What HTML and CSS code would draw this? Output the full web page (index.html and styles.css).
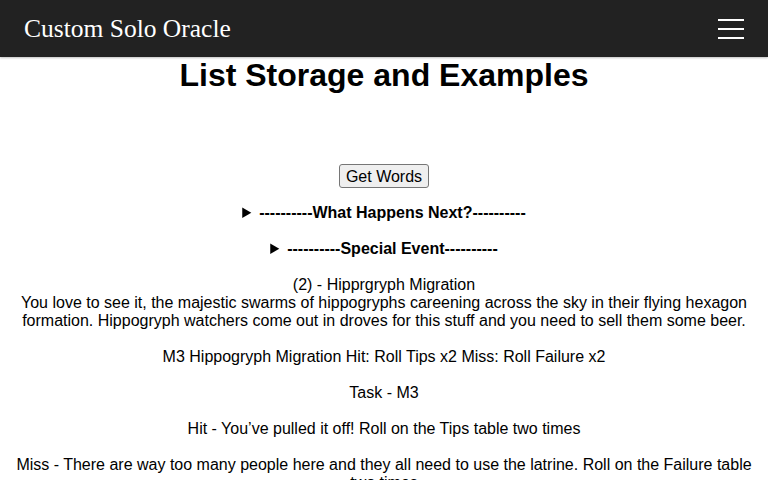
FILE: index.html
```html
<!DOCTYPE html>
<html lang="en">
<head>
<meta charset="utf-8">
<title>Custom Solo Oracle</title>
<link rel="stylesheet" href="styles.css">
</head>
<body>
<nav class="topbar">
  <span class="brand">Custom Solo Oracle</span>
  <button class="menu" aria-label="Menu">
    <span class="bar"></span><span class="bar"></span><span class="bar"></span>
  </button>
</nav>
<main class="content">
  <h1 class="title">List Storage and Examples</h1>
  <div class="actions"><button class="get">Get Words</button></div>
  <details class="section"><summary>----------What Happens Next?----------</summary></details>
  <details class="section"><summary>----------Special Event----------</summary></details>
  <p class="block">(2) - Hipprgryph Migration<br>You love to see it, the majestic swarms of hippogryphs careening across the sky in their flying hexagon formation. Hippogryph watchers come out in droves for this stuff and you need to sell them some beer.</p>
  <p class="block">M3 Hippogryph Migration Hit: Roll Tips x2 Miss: Roll Failure x2</p>
  <p class="block">Task - M3</p>
  <p class="block">Hit - You’ve pulled it off! Roll on the Tips table two times</p>
  <p class="block">Miss - There are way too many people here and they all need to use the latrine. Roll on the Failure table two times</p>
</main>
</body>
</html>
```
FILE: styles.css
```css
html, body {
  margin: 0;
  padding: 0;
  background: #ffffff;
}
body {
  font-family: "Liberation Sans", Arial, sans-serif;
  font-size: 16px;
  line-height: 18px;
  color: #000;
}
.topbar {
  height: 57px;
  background: #222222;
  display: flex;
  align-items: center;
  justify-content: space-between;
  padding: 0 24px;
  box-shadow: 0 1px 2px rgba(0,0,0,0.25);
  position: relative;
  z-index: 1;
}
.brand {
  font-family: "Liberation Serif", "Times New Roman", serif;
  font-size: 25.5px;
  color: #ffffff;
  line-height: 30px;
}
.menu {
  background: none;
  border: 0;
  padding: 0;
  width: 26px;
  height: 20px;
  display: flex;
  flex-direction: column;
  justify-content: space-between;
  cursor: pointer;
}
.bar {
  display: block;
  height: 2px;
  width: 26px;
  background: #ffffff;
}
.content {
  padding: 0 16px;
  text-align: center;
}
.title {
  margin: 0;
  font-size: 32px;
  line-height: 37px;
  font-weight: bold;
}
.actions {
  margin: 70px 0 16px;
  line-height: 0;
}
.get {
  font-family: "Liberation Sans", Arial, sans-serif;
  font-size: 16px;
  line-height: 19px;
  padding: 1px 6px;
  height: 24px;
  border: 1px solid #767676;
  border-radius: 3px;
  background: #efefef;
  color: #000;
}
.section {
  margin: 0 0 18px;
  font-weight: bold;
}
.section summary {
  cursor: pointer;
}
.block {
  margin: 18px 0 0;
}
.section + .block {
  margin-top: 0;
}
```
